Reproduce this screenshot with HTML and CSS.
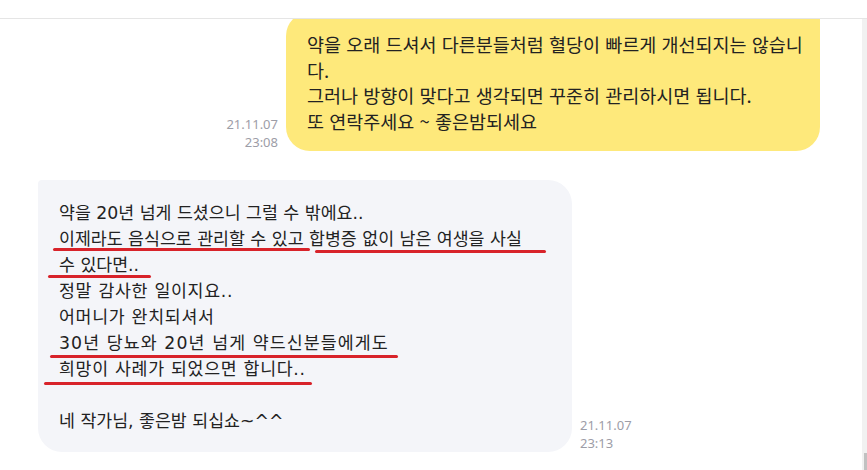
FILE: index.html
```html
<!DOCTYPE html>
<html lang="ko">
<head>
    <meta charset="UTF-8">
    <meta name="viewport" content="width=device-width, initial-scale=1.0">
    <title>대화</title>
    <link rel="stylesheet" href="styles.css">
</head>
<body>
    <div class="top-bar"></div>
    <div class="main">
        <div class="chat">
            <div class="msg msg-me">
                <div class="time">21.11.07<br>23:08</div>
                <div class="bubble bubble-me">
                    <p>약을 오래 드셔서 다른분들처럼 혈당이 빠르게 개선되지는 않습니</p>
                    <p>다.</p>
                    <p>그러나 방향이 맞다고 생각되면 꾸준히 관리하시면 됩니다.</p>
                    <p>또 연락주세요 ~ 좋은밤되세요</p>
                </div>
            </div>
            <div class="msg msg-other">
                <div class="bubble bubble-other">
                    <p>약을 20년 넘게 드셨으니 그럴 수 밖에요..</p>
                    <p>이제라도 음식으로 관리할 수 있고 합병증 없이 남은 여생을 사실</p>
                    <p>수 있다면..</p>
                    <p class="wide">정말 감사한 일이지요..</p>
                    <p class="wide">어머니가 완치되셔서</p>
                    <p class="wider">30년 당뇨와 20년 넘게 약드신분들에게도</p>
                    <p class="wide">희망이 사례가 되었으면 합니다..</p>
                    <p>&nbsp;</p>
                    <p>네 작가님, 좋은밤 되십쇼~^^</p>
                    <!-- hand drawn marks over the text -->
                    <span class="mark" style="left: 15px; top: 68px; width: 257px;"></span>
                    <span class="mark" style="left: 277px; top: 70px; width: 231px;"></span>
                    <span class="mark" style="left: 10px; top: 95px; width: 103px;"></span>
                    <span class="mark" style="left: 12px; top: 175px; width: 348px;"></span>
                    <span class="mark" style="left: 6px; top: 202px; width: 268px;"></span>
                </div>
                <div class="time">21.11.07<br>23:13</div>
            </div>
        </div>
        <div class="scrollbar"><div class="thumb"></div></div>
    </div>
</body>
</html>
```

FILE: styles.css
```css
* {
    padding: 0;
    margin: 0;
    box-sizing: border-box;
}
body {
    background: white;
    font-family: "Noto Sans CJK KR", "Noto Sans", sans-serif;
    color: #222;
    width: 867px;
    height: 470px;
    overflow: hidden;
}
.top-bar {
    height: 19px;
    border-bottom: 1px solid #e5e5e5;
    background: white;
    position: relative;
    z-index: 2;
}
.main {
    display: flex;
    height: 451px;
}
.chat {
    flex-grow: 1;
    overflow: hidden;
    padding: 0 42px 0 38px;
    display: flex;
    flex-direction: column;
    gap: 29px;
}
.msg {
    display: flex;
    align-items: flex-end;
    gap: 8px;
}
.msg-me {
    justify-content: flex-end;
    margin-top: -7px;
}
.bubble {
    width: 534px;
    white-space: nowrap;
}
.bubble-me {
    background: #fee97b;
    font-size: 18.5px;
    line-height: 25.5px;
    padding: 20px 10px 17px 21px;
    border-radius: 24px 0 24px 24px;
}
.bubble-other {
    position: relative;
    background: #f4f5f9;
    font-family: "DejaVu Sans", "Noto Sans CJK KR", sans-serif;
    font-size: 17.3px;
    line-height: 26px;
    padding: 20px 13px 18px 21px;
    border-radius: 4px 24px 24px 24px;
}
.bubble-other .wide {
    letter-spacing: 0.7px;
}
.bubble-other .wider {
    letter-spacing: 1.1px;
}
.time {
    font-family: "Noto Sans", sans-serif;
    font-size: 13px;
    line-height: 18px;
    color: #9d9da7;
}
.msg-me .time {
    text-align: right;
}
.mark {
    position: absolute;
    height: 3px;
    border-radius: 2px;
    background: #d8232a;
}
.scrollbar {
    width: 5px;
    background: #f1f1f1;
    display: flex;
    flex-direction: column;
    justify-content: flex-end;
}
.thumb {
    height: 17px;
    margin-left: 2px;
    background: #c1c1c1;
}
```
